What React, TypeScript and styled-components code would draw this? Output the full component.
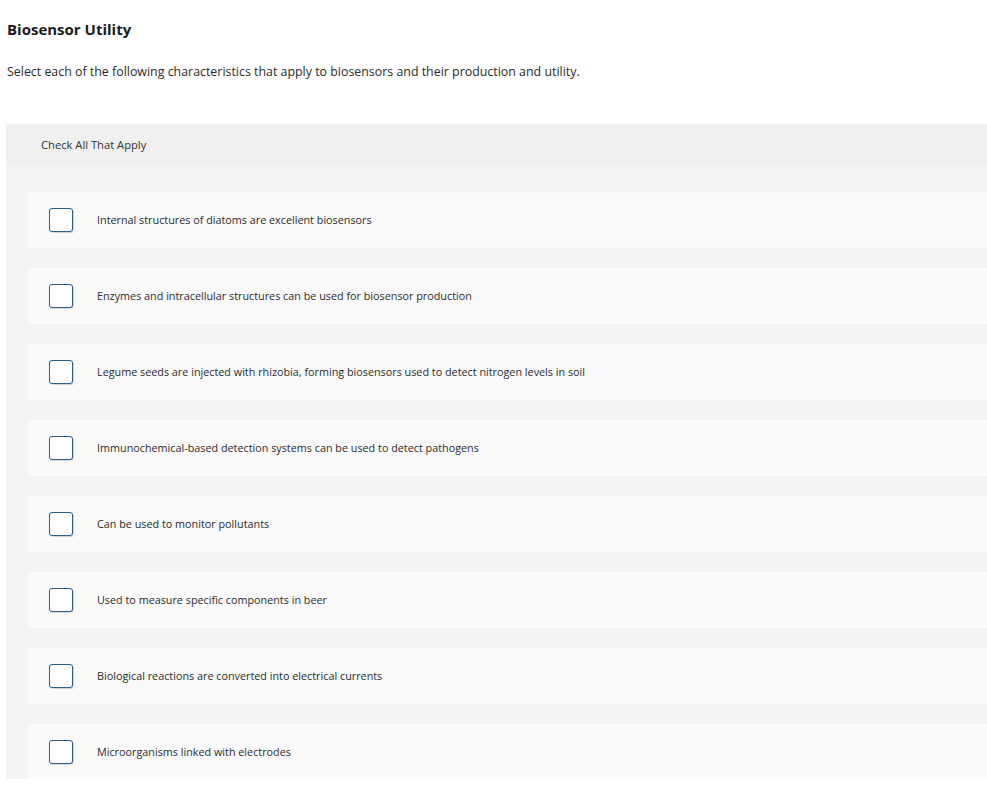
import React from "react";
import styled, { createGlobalStyle } from "styled-components";

const Global = createGlobalStyle`
  html, body { margin: 0; padding: 0; background: #fff; }
  body { font-family: "Open Sans", "Liberation Sans", sans-serif; color: #222; }
`;

const Page = styled.div`
  padding: 0 0 0 6px;
  overflow: hidden;
`;

const Title = styled.h1`
  margin: 0;
  padding: 20px 0 0 1px;
  font-size: 15px;
  font-weight: 700;
  line-height: 18px;
  color: #1b1b1b;
`;

const Prompt = styled.p`
  margin: 0;
  padding: 26px 0 0 1px;
  font-size: 12.4px;
  line-height: 15px;
  color: #2b2b2b;
`;

const Panel = styled.section`
  margin-top: 45px;
  background: #f4f4f4;
  height: 655px;
  overflow: hidden;
`;

const PanelHeader = styled.div`
  box-sizing: border-box;
  height: 42px;
  background: #f0f0f0;
  display: flex;
  align-items: center;
  padding: 0 0 2px 35px;
  font-size: 11.2px;
  color: #333;
`;

const List = styled.div`
  display: flex;
  flex-direction: column;
  gap: 20px;
  padding: 26px 0 0 22px;
`;

const Row = styled.label`
  height: 56px;
  background: #fafafa;
  display: flex;
  align-items: center;
  padding-left: 21px;
  gap: 24px;
  font-size: 10.8px;
  color: #2b2b2b;
`;

const Box = styled.span`
  box-sizing: border-box;
  width: 24px;
  height: 24px;
  border: 1.5px solid #2a5c8e;
  border-radius: 3px;
  background: #fff;
  box-shadow: 1px 1px 1px rgba(0, 0, 0, 0.15);
  flex: none;
`;

const Label = styled.span`
  line-height: 14px;
  margin-top: -1px;
`;

const options = [
  "Internal structures of diatoms are excellent biosensors",
  "Enzymes and intracellular structures can be used for biosensor production",
  "Legume seeds are injected with rhizobia, forming biosensors used to detect nitrogen levels in soil",
  "Immunochemical-based detection systems can be used to detect pathogens",
  "Can be used to monitor pollutants",
  "Used to measure specific components in beer",
  "Biological reactions are converted into electrical currents",
  "Microorganisms linked with electrodes",
];

export default function App() {
  return (
    <>
      <Global />
      <Page>
        <Title>Biosensor Utility</Title>
        <Prompt>
          Select each of the following characteristics that apply to biosensors and their production and utility.
        </Prompt>
        <Panel>
          <PanelHeader>Check All That Apply</PanelHeader>
          <List>
            {options.map((o) => (
              <Row key={o}>
                <Box />
                <Label>{o}</Label>
              </Row>
            ))}
          </List>
        </Panel>
      </Page>
    </>
  );
}
